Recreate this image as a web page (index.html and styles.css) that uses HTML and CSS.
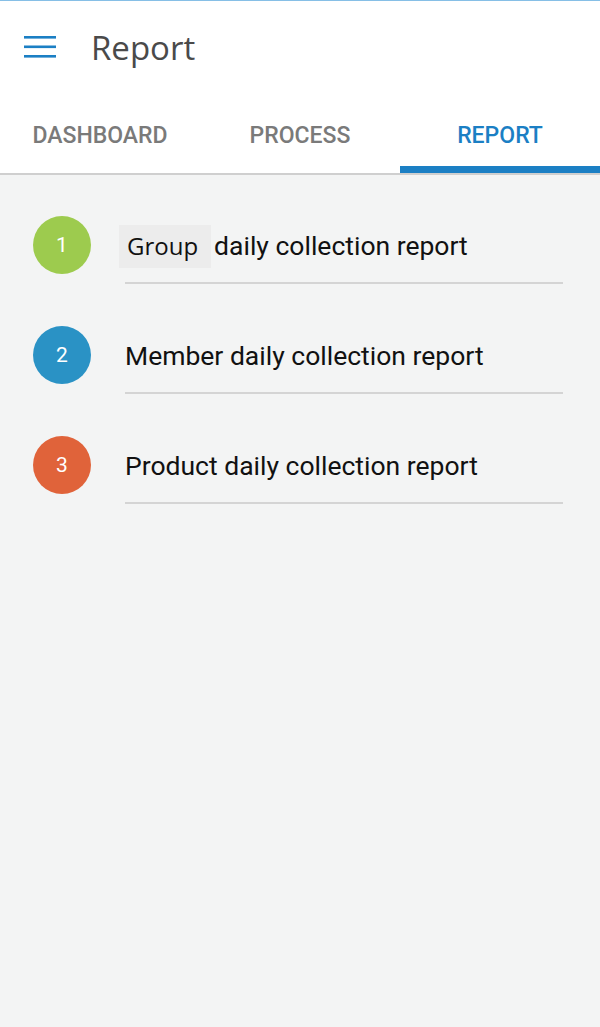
FILE: index.html
```html
<!DOCTYPE html>
<html lang="en">
<head>
<meta charset="utf-8">
<title>Report</title>
<link rel="stylesheet" href="styles.css">
</head>
<body>
<div class="topline"></div>
<header class="appbar">
  <svg class="menu" width="32" height="22" viewBox="0 0 32 22" aria-hidden="true">
    <rect x="0" y="0" width="32" height="2.6" fill="#1b7fc4"/>
    <rect x="0" y="9.5" width="32" height="2.6" fill="#1b7fc4"/>
    <rect x="0" y="19" width="32" height="2.6" fill="#1b7fc4"/>
  </svg>
  <h1 class="title">Report</h1>
</header>
<nav class="tabs">
  <div class="tab">DASHBOARD</div>
  <div class="tab">PROCESS</div>
  <div class="tab active">REPORT</div>
</nav>
<main class="list">
  <div class="item">
    <div class="circle green">1</div>
    <div class="label"><span class="chip">Group</span>daily collection report</div>
  </div>
  <div class="item">
    <div class="circle blue">2</div>
    <div class="label">Member daily collection report</div>
  </div>
  <div class="item">
    <div class="circle orange">3</div>
    <div class="label">Product daily collection report</div>
  </div>
</main>
</body>
</html>
```
FILE: styles.css
```css
html, body {
  margin: 0;
  padding: 0;
}
body {
  background: #f3f4f4;
  font-family: Roboto, "Liberation Sans", sans-serif;
  min-height: 1027px;
}
.topline {
  height: 1px;
  background: #86bfe6;
}
.appbar {
  height: 96px;
  background: #ffffff;
  display: flex;
  align-items: flex-start;
  padding: 0 24px;
}
.menu {
  display: block;
  margin-top: 35px;
  flex: none;
}
.title {
  margin: 30px 0 0 35px;
  font-family: "Open Sans", "Noto Sans", sans-serif;
  font-weight: 400;
  font-size: 33px;
  line-height: 1;
  color: #4a4a4a;
}
.tabs {
  display: grid;
  grid-template-columns: repeat(3, 1fr);
  background: #ffffff;
  border-bottom: 2px solid #cfcfcf;
}
.tab {
  box-sizing: border-box;
  height: 76px;
  padding-top: 27px;
  text-align: center;
  font-size: 23px;
  line-height: 1;
  font-weight: 500;
  color: #7a7a7a;
}
.tab.active {
  color: #1b7fc4;
  border-bottom: 7px solid #1b7fc4;
}
.list {
  padding-top: 33px;
}
.item {
  display: flex;
  height: 76px;
  margin-bottom: 34px;
  padding: 0 37px 0 33px;
}
.circle {
  flex: none;
  align-self: center;
  width: 58px;
  height: 58px;
  border-radius: 50%;
  display: flex;
  align-items: center;
  justify-content: center;
  color: #ffffff;
  font-size: 21px;
  font-weight: 400;
  margin-top: -2px;
}
.green { background: #9dcb4e; }
.blue { background: #2a92c5; }
.orange { background: #e0633a; }
.label {
  flex: 1;
  margin-left: 34px;
  border-bottom: 2px solid #d4d4d4;
  display: flex;
  align-items: center;
  padding-top: 2px;
  font-size: 26.5px;
  line-height: 26px;
  color: #111111;
}
.chip {
  margin-left: -6px;
  margin-right: 3px;
  padding: 0 13px 0 8px;
  height: 43px;
  display: flex;
  align-items: center;
  background: #ececec;
  font-family: "Open Sans", "Noto Sans", sans-serif;
  font-size: 24px;
}
```
